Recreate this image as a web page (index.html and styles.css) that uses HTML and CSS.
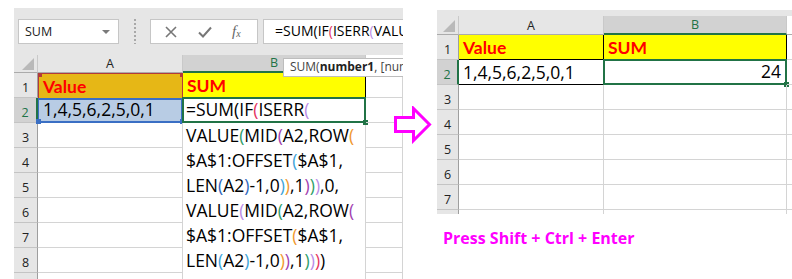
FILE: index.html
```
<!DOCTYPE html>
<html lang="en">
<head>
    <meta charset="UTF-8">
    <title>Sum digits in a cell</title>
    <link rel="stylesheet" href="styles.css">
</head>
<body>
    <div class="panel-left">
        <div class="formula-bar">
            <div class="name-box">SUM <span class="caret"></span></div>
            <div class="grip"></div>
            <div class="fx-buttons">
                <svg width="14" height="14" viewBox="0 0 14 14"><path d="M2 2 L12 12 M12 2 L2 12" stroke="#777" stroke-width="1.6" fill="none"/></svg>
                <svg width="16" height="14" viewBox="0 0 16 14"><path d="M2 7.5 L6 11.5 L14 2.5" stroke="#777" stroke-width="2" fill="none"/></svg>
                <span class="fx">f<sub>x</sub></span>
            </div>
            <div class="formula-input">=SUM<span class="p0">(</span>IF<span class="p1">(</span>ISERR<span class="p2">(</span>VALU</div>
        </div>

        <div class="sheet sheet-left">
            <div class="hd corner"><span class="tri"></span></div>
            <div class="hd">A</div>
            <div class="hd hd-on">B</div>
            <div class="hd hd-c"></div>

            <div class="rh">1</div>
            <div class="cell gold bold-red ref-red">Value</div>
            <div class="cell yellow bold-red bl-r">SUM</div>
            <div class="cell"></div>

            <div class="rh rh-on">2</div>
            <div class="cell blue-sel">1,4,5,6,2,5,0,1</div>
            <div class="edit">
                <div class="line first">=SUM<span class="p0">(</span>IF<span class="p1">(</span>ISERR<span class="p2">(</span></div>
                <div class="line">VALUE<span class="p3">(</span>MID<span class="p4">(</span>A2,ROW<span class="p5">(</span></div>
                <div class="line">$A$1:OFFSET<span class="p6">(</span>$A$1,</div>
                <div class="line">LEN<span class="p7">(</span>A2<span class="p7">)</span>-1,0<span class="p6">)</span><span class="p5">)</span>,1<span class="p4">)</span><span class="p3">)</span><span class="p2">)</span>,0,</div>
                <div class="line">VALUE<span class="p2">(</span>MID<span class="p3">(</span>A2,ROW<span class="p4">(</span></div>
                <div class="line">$A$1:OFFSET<span class="p5">(</span>$A$1,</div>
                <div class="line">LEN<span class="p6">(</span>A2<span class="p6">)</span>-1,0<span class="p5">)</span><span class="p4">)</span>,1<span class="p3">)</span><span class="p2">)</span><span class="p1">)</span><span class="p0">)</span></div>
            </div>
            <div class="cell"></div>

            <div class="rh">3</div><div class="cell"></div><div class="cell"></div>
            <div class="rh">4</div><div class="cell"></div><div class="cell"></div>
            <div class="rh">5</div><div class="cell"></div><div class="cell"></div>
            <div class="rh">6</div><div class="cell"></div><div class="cell"></div>
            <div class="rh">7</div><div class="cell"></div><div class="cell"></div>
            <div class="rh">8</div><div class="cell"></div><div class="cell"></div>
            <div class="rh"></div><div class="cell"></div><div class="cell"></div><div class="cell"></div>
        </div>

        <div class="tooltip">SUM(<b>number1</b>, [num</div>
    </div>

    <svg class="arrow" width="38" height="38" viewBox="0 0 38 38">
        <polygon points="1.5,11.5 19.5,11.5 19.5,2.5 35.5,18.5 19.5,34.5 19.5,25.5 1.5,25.5" fill="#fff" stroke="#ff00ff" stroke-width="3"/>
    </svg>

    <div class="right-side">
        <div class="panel-right">
            <div class="sheet sheet-right">
                <div class="hd corner"><span class="tri"></span></div>
                <div class="hd">A</div>
                <div class="hd hd-on">B</div>
                <div class="hd hd-c"></div>

                <div class="rh">1</div>
                <div class="cell yellow bold-red bl-b bl-r">Value</div>
                <div class="cell yellow bold-red bl-b bl-r">SUM</div>
                <div class="cell"></div>

                <div class="rh rh-on">2</div>
                <div class="cell bl-b">1,4,5,6,2,5,0,1</div>
                <div class="cell active num">24</div>
                <div class="cell"></div>

                <div class="rh">3</div><div class="cell"></div><div class="cell"></div><div class="cell"></div>
                <div class="rh">4</div><div class="cell"></div><div class="cell"></div><div class="cell"></div>
                <div class="rh">5</div><div class="cell"></div><div class="cell"></div><div class="cell"></div>
                <div class="rh">6</div><div class="cell"></div><div class="cell"></div><div class="cell"></div>
                <div class="rh">7</div><div class="cell"></div><div class="cell"></div><div class="cell"></div>
                <div class="rh"></div><div class="cell"></div><div class="cell"></div><div class="cell"></div>
            </div>
        </div>
        <p class="hint">Press Shift + Ctrl + Enter</p>
    </div>
</body>
</html>
```

FILE: styles.css
```
body {
    margin: 0;
    width: 792px;
    height: 279px;
    overflow: hidden;
    display: flex;
    align-items: flex-start;
    position: relative;
    background: #fff;
    font-family: "Open Sans", sans-serif;
    color: #000;
}

/* left screenshot */
.panel-left {
    margin: 8px 0 0 14px;
    width: 389px;
    height: 271px;
    background: #e6e6e6;
    overflow: hidden;
    position: relative;
    flex-shrink: 0;
}
.formula-bar {
    height: 47px;
    box-sizing: border-box;
    padding: 11px 0 0 4px;
    display: flex;
    align-items: flex-start;
}
.name-box {
    width: 101px;
    height: 25px;
    box-sizing: border-box;
    background: #fff;
    border: 1px solid #c6c6c6;
    display: flex;
    align-items: center;
    justify-content: space-between;
    padding: 0 8px 0 6px;
    font-size: 12.5px;
    color: #222;
}
.caret {
    border-left: 4px solid transparent;
    border-right: 4px solid transparent;
    border-top: 4px solid #7a7a7a;
}
.grip {
    width: 31px;
    height: 25px;
    background: radial-gradient(circle, #a8a8a8 1px, transparent 1.3px) center 7px / 2px 4px repeat-y;
}
.fx-buttons {
    width: 108px;
    height: 25px;
    box-sizing: border-box;
    background: #fff;
    border: 1px solid #c6c6c6;
    display: flex;
    align-items: center;
    padding: 0 8px 0 13px;
    gap: 19px;
}
.fx {
    font-family: "Liberation Serif", serif;
    font-style: italic;
    font-size: 15px;
    color: #666;
    line-height: 1;
}
.fx sub {
    font-size: 10px;
    vertical-align: -1px;
}
.formula-input {
    margin-left: 5px;
    flex: 1;
    height: 25px;
    box-sizing: border-box;
    background: #fff;
    border: 1px solid #c6c6c6;
    border-right: none;
    padding-left: 11px;
    font-size: 14px;
    line-height: 22px;
    white-space: nowrap;
    overflow: hidden;
}

/* grids */
.sheet {
    display: grid;
    background: #fff;
}
.sheet-left {
    grid-template-columns: 24px 145px 183px 1fr;
    grid-template-rows: 18px repeat(9, 25px);
}
.sheet-right {
    grid-template-columns: 22px 145px 183px 1fr;
    grid-template-rows: 19px repeat(8, 25px);
}
.hd {
    background: #e6e6e6;
    border-right: 1px solid #c9c9c9;
    border-bottom: 1px solid #ababab;
    box-sizing: border-box;
    display: flex;
    align-items: flex-end;
    justify-content: center;
    padding-bottom: 2px;
    font-size: 12.5px;
    line-height: 1;
    color: #222;
}
.hd-on {
    background: #d2d2d2;
    color: #217346;
    border-bottom: 2px solid #217346;
}
.hd-c {
    background: #fff;
    border-right: none;
}
.corner {
    justify-content: flex-end;
    padding: 0 3px 2px 0;
}
.tri {
    width: 0;
    height: 0;
    border-left: 12px solid transparent;
    border-bottom: 12px solid #b9b9b9;
}
.rh {
    background: #e6e6e6;
    border-right: 1px solid #9e9e9e;
    border-bottom: 1px solid #c4c4c4;
    box-sizing: border-box;
    display: flex;
    align-items: flex-end;
    justify-content: center;
    padding-bottom: 3px;
    font-size: 12.5px;
    line-height: 1;
    color: #222;
}
.rh-on {
    background: #d2d2d2;
    color: #217346;
    border-right: 2px solid #217346;
}
.cell {
    border-right: 1px solid #d4d4d4;
    border-bottom: 1px solid #d4d4d4;
    box-sizing: border-box;
    display: flex;
    align-items: flex-end;
    padding: 0 4px 3px 4px;
    font-size: 17.5px;
    line-height: 1;
    white-space: nowrap;
    position: relative;
}
.gold { background: #e6b716; }
.yellow { background: #ffff00; }
.bold-red {
    font-family: Lato, "Open Sans", sans-serif;
    font-weight: bold;
    color: #ff0000;
    font-size: 17.5px;
}
.ref-red {
    border: 1px solid #b23a3a;
    border-bottom: none;
}
.ref-red::before, .ref-red::after {
    content: "";
    position: absolute;
    top: -1px;
    width: 4px;
    height: 4px;
    background: #b23a3a;
}
.ref-red::before { left: -1px; }
.ref-red::after { right: -2px; }
.blue-sel {
    background: #b8cce4;
    border: 2px solid #3a6fc4;
    border-left-width: 1px;
}
.blue-sel::before, .blue-sel::after {
    content: "";
    position: absolute;
    bottom: -3px;
    width: 5px;
    height: 5px;
    background: #3a6fc4;
}
.blue-sel::before { left: -3px; }
.blue-sel::after { right: -4px; }

/* the cell in edit mode, text running over the rows below */
.edit {
    grid-row: span 7;
    background: #fff;
    border-right: 1px solid #d4d4d4;
    position: relative;
    font-size: 17.5px;
    white-space: nowrap;
}
.line {
    height: 25px;
    box-sizing: border-box;
    display: flex;
    align-items: flex-end;
    padding: 0 0 4px 3px;
    line-height: 1;
}
.line.first {
    border: 2px solid #217346;
    margin: -1px 0 0 -1px;
    width: 184px;
    height: 26px;
    padding-left: 2px;
    padding-bottom: 3px;
}
.line.first::after {
    content: "";
    position: absolute;
    top: 22px;
    right: -3px;
    width: 5px;
    height: 5px;
    background: #217346;
}

.p0 { color: #000; }
.p1 { color: #e4345f; }
.p2 { color: #b98ce6; }
.p3 { color: #2f9e68; }
.p4 { color: #a23fb0; }
.p5 { color: #f0982e; }
.p6 { color: #3ea3d8; }
.p7 { color: #2f68be; }

.tooltip {
    position: absolute;
    left: 269px;
    top: 50px;
    height: 17px;
    padding: 0 6px;
    background: #fff;
    border: 1px solid #bdbdbd;
    font-size: 12px;
    line-height: 16px;
    color: #444;
    white-space: nowrap;
}
.tooltip b { color: #222; }

.arrow {
    position: absolute;
    left: 394px;
    top: 106px;
}

/* right screenshot */
.right-side {
    margin: 10px 0 0 34px;
    width: 355px;
}
.panel-right {
    height: 204px;
    box-sizing: border-box;
    padding-top: 6px;
    background: #e6e6e6;
    overflow: hidden;
}
.bl-b { border-bottom: 1px solid #000; }
.bl-r { border-right: 1px solid #000; }
.active {
    border: 2px solid #217346;
    margin: -1px 0 0 -1px;
}
.active::after {
    content: "";
    position: absolute;
    bottom: -4px;
    right: -4px;
    width: 5px;
    height: 5px;
    background: #217346;
}
.num { justify-content: flex-end; }
.hint {
    margin: 13px 0 0 6px;
    font-size: 16px;
    font-weight: bold;
    color: #ff00ff;
}
```
